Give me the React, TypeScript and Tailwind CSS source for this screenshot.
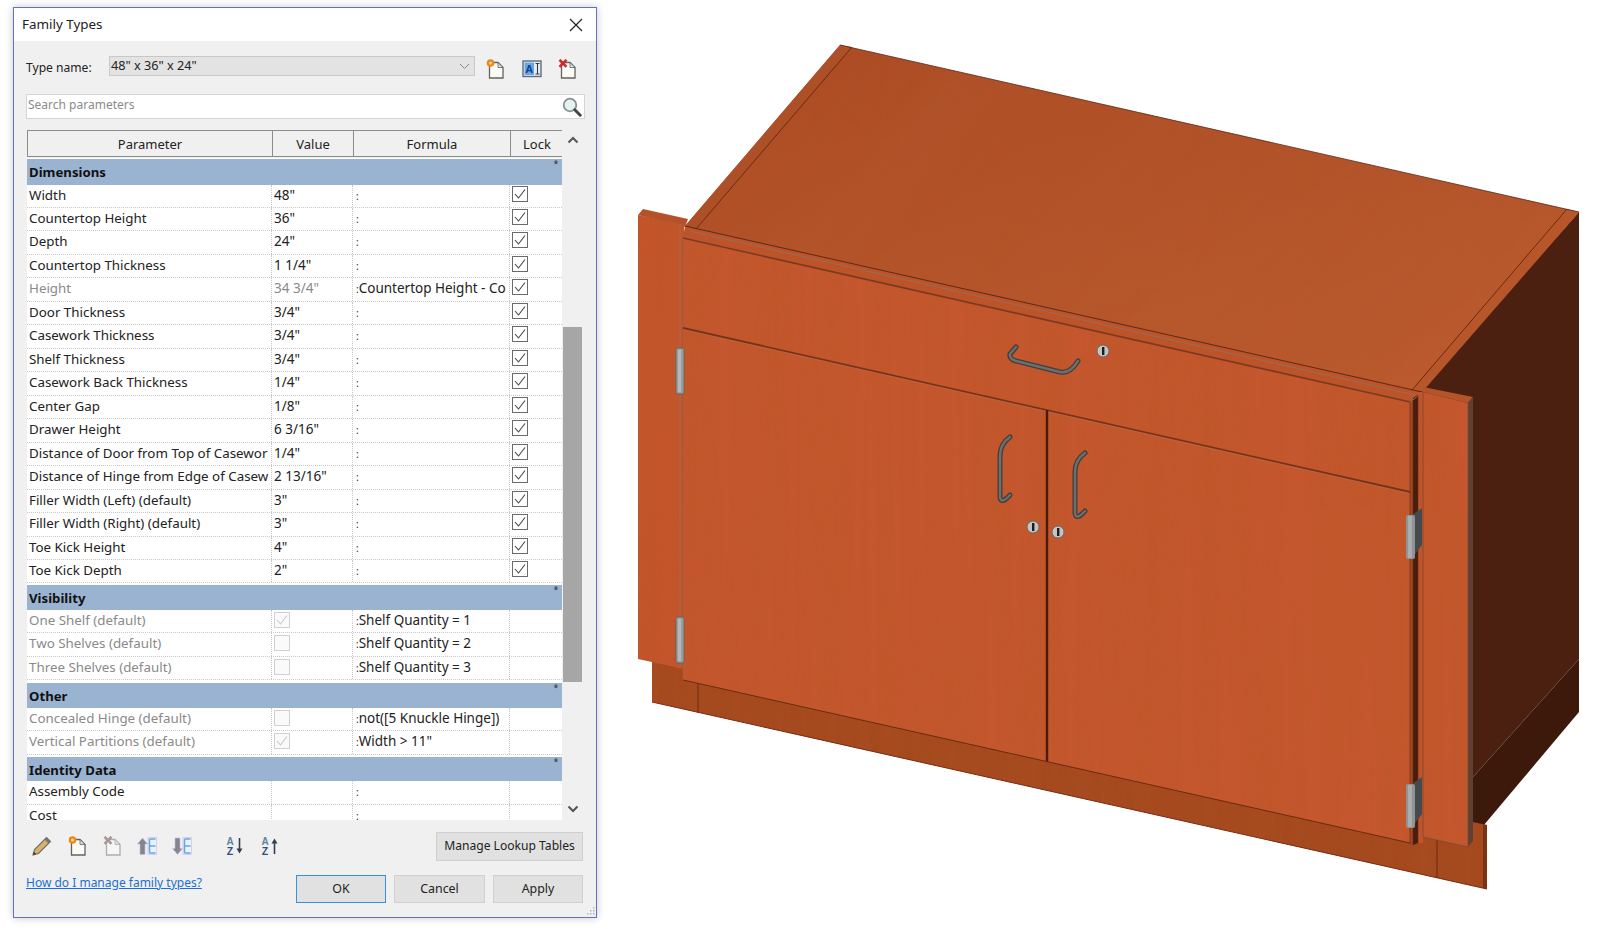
import React from "react";

const font = "[font-family:'Noto_Sans',sans-serif]";

type Row = { name: string; value?: string; formula?: string; muted?: boolean; lock?: boolean; box?: "on" | "off" };

const dims: Row[] = [
  { name: "Width", value: '48"', lock: true },
  { name: "Countertop Height", value: '36"', lock: true },
  { name: "Depth", value: '24"', lock: true },
  { name: "Countertop Thickness", value: '1 1/4"', lock: true },
  { name: "Height", value: '34 3/4"', formula: "Countertop Height - Co", muted: true, lock: true },
  { name: "Door Thickness", value: '3/4"', lock: true },
  { name: "Casework Thickness", value: '3/4"', lock: true },
  { name: "Shelf Thickness", value: '3/4"', lock: true },
  { name: "Casework Back Thickness", value: '1/4"', lock: true },
  { name: "Center Gap", value: '1/8"', lock: true },
  { name: "Drawer Height", value: '6 3/16"', lock: true },
  { name: "Distance of Door from Top of Casewor", value: '1/4"', lock: true },
  { name: "Distance of Hinge from Edge of Casew", value: '2 13/16"', lock: true },
  { name: "Filler Width (Left) (default)", value: '3"', lock: true },
  { name: "Filler Width (Right) (default)", value: '3"', lock: true },
  { name: "Toe Kick Height", value: '4"', lock: true },
  { name: "Toe Kick Depth", value: '2"', lock: true },
];
const vis: Row[] = [
  { name: "One Shelf (default)", box: "on", formula: "Shelf Quantity = 1", muted: true },
  { name: "Two Shelves (default)", box: "off", formula: "Shelf Quantity = 2", muted: true },
  { name: "Three Shelves (default)", box: "off", formula: "Shelf Quantity = 3", muted: true },
];
const other: Row[] = [
  { name: "Concealed Hinge (default)", box: "off", formula: "not([5 Knuckle Hinge])", muted: true },
  { name: "Vertical Partitions (default)", box: "on", formula: 'Width > 11"', muted: true },
];
const identity: Row[] = [{ name: "Assembly Code" }, { name: "Cost" }];

function Check({ on, dim }: { on: boolean; dim?: boolean }) {
  return (
    <svg width="16" height="16" viewBox="0 0 16 16" className="shrink-0">
      <rect x="0.5" y="0.5" width="15" height="15" fill={dim ? "#fafafa" : "#fff"} stroke={dim ? "#d0d0d0" : "#6a6a6a"} />
      {on && <path d="M3 8l3.5 4L13 3.5" fill="none" stroke={dim ? "#c8c8c8" : "#444"} strokeWidth="1.1" />}
    </svg>
  );
}

function ParamRow({ r }: { r: Row }) {
  return (
    <div className="flex h-[23.47px] shrink-0 border-b border-dotted border-[#c8c8c8] text-[13.5px] leading-[21px] text-[#222]">
      <div className={`w-[245px] shrink-0 overflow-hidden whitespace-nowrap border-r border-dotted border-[#c8c8c8] pl-[2px] text-[13.35px] ${r.muted ? "text-[#8a8a8a]" : ""}`}>{r.name}</div>
      <div className={`flex w-[81px] shrink-0 items-start overflow-hidden whitespace-nowrap border-r border-dotted border-[#c8c8c8] pl-[2px] ${r.muted ? "text-[#8a8a8a]" : ""}`}>
        {r.box ? <span className="pl-[0px] pt-[2px]"><Check on={r.box === "on"} dim /></span> : r.value}
      </div>
      <div className="w-[157px] shrink-0 overflow-hidden whitespace-nowrap border-r border-dotted border-[#c8c8c8] pl-[3px]">
        <span className="text-[10px]">:</span>{r.formula}
      </div>
      <div className="flex w-[52px] shrink-0 items-start pl-[2px] pt-[1px]">{r.lock && <Check on />}</div>
    </div>
  );
}

function Section({ title, top, h }: { title: string; top: string; h: string }) {
  return (
    <div className={`${top} ${h} flex shrink-0 justify-between bg-[#9ab3d1] pl-[2px] pr-[4px] text-[13.2px] font-bold leading-[27px] text-[#111]`}>
      <span>{title}</span>
      <span className="text-[8px] leading-[10px] text-[#444]">*</span>
    </div>
  );
}

function Head({ w, label }: { w: string; label: string }) {
  return <div className={`${w} shrink-0 border-r border-[#8c8c8c] text-center text-[13px] leading-[27px] text-[#222]`}>{label}</div>;
}

function Doc({ dim, badge }: { dim?: boolean; badge: "star" | "x" }) {
  const c = dim ? "#adadad" : "#626262";
  return (
    <svg width="20" height="20" viewBox="0 0 20 20" className="shrink-0">
      <path d="M3.5 3.5h8.5l5 5v10.5H3.5z" fill={dim ? "#f6f6f6" : "#fbfbf6"} stroke={c} strokeWidth="1.3" />
      <path d="M12 3.5v5h5z" fill="#dfe3ea" stroke={c} strokeWidth="0.8" />
      {badge === "star" ? (
        <g>
          <circle cx="4.5" cy="4" r="3.8" fill="#ee8618" />
          <circle cx="4.5" cy="4" r="1.5" fill="#fbd98a" />
        </g>
      ) : (
        <path d="M1.5 0.8l7 7M8.5 0.8l-7 7" stroke={dim ? "#a89898" : "#d12a2a"} strokeWidth="2.6" />
      )}
    </svg>
  );
}

function Rename() {
  return (
    <svg width="20" height="20" viewBox="0 0 20 20" className="shrink-0">
      <rect x="1" y="2" width="18" height="15.5" fill="#e8edf4" stroke="#5f6b7c" strokeWidth="1.4" />
      <rect x="2.5" y="3.5" width="9.5" height="12.5" fill="#66a8e6" />
      <text x="7.3" y="14" textAnchor="middle" fontFamily="Liberation Sans" fontWeight="700" fontSize="11" fill="#123f86">A</text>
      <path d="M13.5 4.5h4M13.5 15h4M15.5 4.5V15" stroke="#3a3a3a" strokeWidth="1.1" />
    </svg>
  );
}

function Search() {
  return (
    <svg width="20" height="20" viewBox="0 0 20 20" className="shrink-0">
      <circle cx="8" cy="8" r="6.3" fill="#e6f2f2" stroke="#87938f" strokeWidth="1.8" />
      <path d="M12.8 12.8l5.4 5.4" stroke="#454545" strokeWidth="3" strokeLinecap="round" />
    </svg>
  );
}

function Pencil() {
  return (
    <svg width="20" height="20" viewBox="0 0 20 20" className="shrink-0">
      <path d="M1 19l1.5-5.5L14.5 1.5l4 4L6.5 17.5z" fill="#d6b26c" stroke="#6f6a5a" strokeWidth="1.1" />
      <path d="M14.5 1.5l4 4-2 2-4-4z" fill="#7d7472" />
      <path d="M1 19l.9-3.2 2.3 2.3z" fill="#3a3a3a" />
    </svg>
  );
}

function MoveIcon({ up }: { up?: boolean }) {
  return (
    <svg width="20" height="20" viewBox="0 0 20 20" className="shrink-0">
      <path d={up ? "M5.5 2l5 6H8v10.5H3V8H.5z" : "M5.5 18.5l5-6H8V2H3v10.5H.5z"} fill="#84858f" stroke="#c9b8e6" strokeWidth="0.6" />
      <rect x="11" y="1.5" width="8.5" height="17" fill="#e9f3fb" stroke="#d3c4ec" strokeWidth="0.8" />
      <path d="M12.5 3h6M12.5 10h6M12.5 17h6M12.5 3v14" fill="none" stroke="#63a8e2" strokeWidth="1.5" />
    </svg>
  );
}

function Sort({ down }: { down?: boolean }) {
  return (
    <svg width="20" height="20" viewBox="0 0 20 20" className="shrink-0">
      <text x="6" y="8.5" textAnchor="middle" fontFamily="Liberation Sans" fontWeight="700" fontSize="10" fill="#5f83a8">A</text>
      <text x="6" y="18.5" textAnchor="middle" fontFamily="Liberation Sans" fontWeight="700" fontSize="10.5" fill="#324f70">Z</text>
      <path d={down ? "M15.5 2v12" : "M15.5 18V6"} stroke="#324056" strokeWidth="1.6" fill="none" />
      <path d={down ? "M12.5 12.5h6l-3 5z" : "M12.5 7.5h6l-3-5z"} fill="#324056" />
    </svg>
  );
}

function Btn({ label, w, focus }: { label: string; w: string; focus?: boolean }) {
  return (
    <div className={`${w} flex h-[28px] shrink-0 items-center justify-center border text-[12.4px] text-[#222] ${focus ? "border-[#3a8fe0] bg-[#e1e1e1]" : "border-[#d0d0d0] bg-[#e1e1e1]"}`}>
      {label}
    </div>
  );
}

function Grip() {
  return (
    <svg width="11" height="11" viewBox="0 0 11 11" className="self-end">
      <path d="M9 1h1.5v1.5H9zM6 4h1.5v1.5H6zM9 4h1.5v1.5H9zM3 7h1.5v1.5H3zM6 7h1.5v1.5H6zM9 7h1.5v1.5H9z" fill="#b5b5b5" />
    </svg>
  );
}

function Dialog() {
  return (
    <div className={`${font} ml-[13px] mt-[7px] flex h-[911px] w-[584px] shrink-0 flex-col border border-[#6470c0] bg-[#f0f0f0] shadow-[0_0_8px_rgba(0,0,0,0.22)]`}>
      <div className="flex h-[33px] shrink-0 items-center justify-between bg-white pl-[8px] pr-[13px]">
        <span className="text-[13.4px] text-[#222]">Family Types</span>
        <svg width="14" height="14" viewBox="0 0 14 14"><path d="M1 1l12 12M13 1L1 13" stroke="#222" strokeWidth="1.2" /></svg>
      </div>

      <div className="flex flex-1 flex-col pl-[12px] pr-[11px]">
        <div className="mt-[14px] flex h-[22px] shrink-0 items-center">
          <span className="w-[83px] shrink-0 pl-[0px] pt-[5px] text-[12.1px] text-[#222]">Type name:</span>
          <div className="flex h-[20px] w-[366px] shrink-0 items-center justify-between border border-[#c8c8c8] bg-[#e3e3e3] pl-[1px] pr-[4px] text-[12.7px] text-[#222]">
            <span>48" x 36" x 24"</span>
            <svg width="11" height="7" viewBox="0 0 11 7"><path d="M1 1l4.5 4.5L10 1" fill="none" stroke="#888" strokeWidth="1" /></svg>
          </div>
          <div className="ml-[11px] mt-[5px] flex gap-[16px]">
            <Doc badge="star" />
            <Rename />
            <Doc badge="x" />
          </div>
        </div>

        <div className="mt-[17px] flex h-[25px] shrink-0 items-center justify-between border border-[#d4d4d4] bg-white pl-[1px] pr-0 text-[12px] text-[#8a8a8a]">
          <span className="-mt-[4px]">Search parameters</span>
          <span className="-ml-[2px] pr-[2px]"><Search /></span>
        </div>

        <div className="mt-[11px] flex h-[690px] shrink-0 pl-[1px]">
          <div className="flex w-[535px] shrink-0 flex-col overflow-hidden bg-white">
            <div className="flex h-[27px] shrink-0 border-b border-l border-t border-[#8c8c8c] bg-[#f0f0f0]">
              <Head w="w-[245px]" label="Parameter" />
              <Head w="w-[81px]" label="Value" />
              <Head w="w-[157px]" label="Formula" />
              <div className="w-[52px] shrink-0 text-center text-[13px] leading-[27px] text-[#222]">Lock</div>
            </div>
            <div className="h-[1px] shrink-0 bg-[#f0f0f0]" />
            <Section title="Dimensions" top="mt-[1px]" h="h-[25.5px]" />
            {dims.map((r) => <ParamRow key={r.name} r={r} />)}
            <Section title="Visibility" top="mt-[2px]" h="h-[24.5px]" />
            {vis.map((r) => <ParamRow key={r.name} r={r} />)}
            <Section title="Other" top="mt-[3px]" h="h-[24.5px]" />
            {other.map((r) => <ParamRow key={r.name} r={r} />)}
            <Section title="Identity Data" top="mt-[2px]" h="h-[24.5px]" />
            {identity.map((r) => <ParamRow key={r.name} r={r} />)}
          </div>
          <div className="flex w-[21px] shrink-0 flex-col items-center bg-[#f0f0f0]">
            <svg width="12" height="8" viewBox="0 0 12 8" className="mt-[6px] shrink-0"><path d="M1.5 6.5L6 2l4.5 4.5" fill="none" stroke="#555" strokeWidth="2" /></svg>
            <div className="mt-[183px] h-[355px] w-[19px] shrink-0 bg-[#a6a6a6]" />
            <svg width="12" height="8" viewBox="0 0 12 8" className="mt-[123px] shrink-0"><path d="M1.5 1.5L6 6l4.5-4.5" fill="none" stroke="#555" strokeWidth="2" /></svg>
          </div>
        </div>

        <div className="mt-[12px] flex h-[29px] shrink-0 items-center justify-between pl-[6px] pr-[2px]">
          <div className="-mt-[2px] flex items-center">
            <Pencil />
            <span className="ml-[16px]"><Doc badge="star" /></span>
            <span className="ml-[15px]"><Doc dim badge="x" /></span>
            <span className="ml-[14px]"><MoveIcon up /></span>
            <span className="ml-[15px]"><MoveIcon /></span>
            <span className="ml-[32px]"><Sort down /></span>
            <span className="ml-[15px]"><Sort /></span>
          </div>
          <div className="flex h-[29px] w-[147px] items-center justify-center whitespace-nowrap border border-[#d0d0d0] bg-[#e1e1e1] text-[12.1px] text-[#222]">Manage Lookup Tables</div>
        </div>

        <div className="mt-[14px] flex shrink-0 items-start justify-between pr-[2px]">
          <span className="-mt-[1px] text-[12px] text-[#1a6fd6] underline">How do I manage family types?</span>
          <div className="flex gap-[8px]">
            <Btn label="OK" w="w-[90px]" focus />
            <Btn label="Cancel" w="w-[91px]" />
            <Btn label="Apply" w="w-[90px]" />
          </div>
        </div>
        <div className="-mr-[10px] mt-auto flex justify-end"><Grip /></div>
      </div>
    </div>
  );
}

function Handle({ d }: { d: string }) {
  return (
    <g fill="none" strokeLinecap="round" strokeLinejoin="round">
      <path d={d} stroke="#3f3f3f" strokeWidth="5" />
      <path d={d} stroke="#6e6e6e" strokeWidth="2.4" />
    </g>
  );
}

function Lock({ x, y }: { x: number; y: number }) {
  return (
    <g>
      <circle cx={x} cy={y} r="6" fill="#c4c4c4" stroke="#6a6a6a" strokeWidth="1" />
      <rect x={x - 1} y={y - 4} width="2.4" height="8" fill="#1c1c1c" />
    </g>
  );
}

function HingeLeft({ y }: { y: number }) {
  return (
    <g>
      <rect x="676" y={y} width="8" height="46" rx="2" fill="#9a9d9e" stroke="#5e6060" strokeWidth="0.8" />
      <rect x="678" y={y + 2} width="3" height="42" fill="#b4b7b8" />
    </g>
  );
}

function HingeRight({ y }: { y: number }) {
  return (
    <g>
      <path d={`M1412 ${y}l10 -7v37l-10 13z`} fill="#464a4d" />
      <rect x="1406" y={y} width="9" height="44" rx="2" fill="#8f9496" />
      <rect x="1408" y={y + 1} width="4" height="42" fill="#a9adae" />
    </g>
  );
}

function Wood({ clip, filter, angle = 0, opacity = 0.5 }: { clip: string; filter: string; angle?: number; opacity?: number }) {
  return (
    <g clipPath={`url(#${clip})`} opacity={opacity}>
      <g transform={angle ? `rotate(${angle} 1100 400)` : undefined}>
        <rect x={angle ? 300 : 620} y={angle ? -400 : 0} width={angle ? 1600 : 980} height={angle ? 1600 : 929} filter={`url(#${filter})`} />
      </g>
    </g>
  );
}

const P = {
  top: "840,45 1579,212 1422,392 685,226",
  face: "683,238 1410,402 1410,843 683,680",
  lfill: "638,215 684,225 684,669 638,659",
  rfill: "1423,392 1468,403 1468,847 1423,837",
  kick: "652,650 1487,825 1487,889 652,702",
};

function Cabinet() {
  return (
    <svg viewBox="620 0 980 929" width="980" height="929" className="ml-[23px] shrink-0">
      <defs>
        <filter id="grainV" x="0" y="0" width="100%" height="100%">
          <feTurbulence type="fractalNoise" baseFrequency="0.05 0.0015" numOctaves="4" seed="7" />
          <feColorMatrix type="matrix" values="0 0 0 0 0.45  0 0 0 0 0.1  0 0 0 0 0.02  1.6 0 0 0 -0.6" />
        </filter>
        <filter id="grainT" x="0" y="0" width="100%" height="100%">
          <feTurbulence type="fractalNoise" baseFrequency="0.014 0.0012" numOctaves="4" seed="3" />
          <feColorMatrix type="matrix" values="0 0 0 0 0.45  0 0 0 0 0.1  0 0 0 0 0.03  2 0 0 0 -0.75" />
        </filter>
        <linearGradient id="topG" x1="0.2" y1="0" x2="0.8" y2="1">
          <stop offset="0" stopColor="#ad4d25" />
          <stop offset="1" stopColor="#ba5a2e" />
        </linearGradient>
        <clipPath id="cTop"><polygon points={P.top} /></clipPath>
        <clipPath id="cFace"><polygon points={P.face} /></clipPath>
        <clipPath id="cL"><polygon points={P.lfill} /></clipPath>
        <clipPath id="cR"><polygon points={P.rfill} /></clipPath>
        <clipPath id="cK"><polygon points={P.kick} /></clipPath>
      </defs>

      {/* right side */}
      <polygon points="1410,400 1579,212 1579,659 1473,777 1410,800" fill="#4c2010" />
      <polygon points="1473,777 1579,659 1579,712 1473,838" fill="#3d190b" />

      {/* toe kick */}
      <polygon points={P.kick} fill="#a5491f" />
      <Wood clip="cK" filter="grainV" opacity={0.32} />
      <polygon points="1483,824 1487,825 1487,889 1483,888" fill="#7a3415" />
      <path d="M698 683V713M1437 838V878" stroke="#6a2c12" strokeWidth="1" />
      <path d="M652 702L1487 889" stroke="#7a2a10" strokeWidth="1" />

      {/* top */}
      <polygon points={P.top} fill="url(#topG)" />
      <Wood clip="cTop" filter="grainT" angle={42} opacity={0.4} />
      <polygon points="1567,209 1579,212 1422,392 1412,390" fill="#b8562b" />
      <path d="M1567 209L1412 390" stroke="#6a2a10" strokeWidth="1" />
      <polygon points="840,45 852,47 696,229 685,226" fill="#ad5028" />
      <path d="M852 47L696 229" stroke="#6a2a10" strokeWidth="1" />
      <path d="M840 45L1579 212" stroke="#5a2a16" strokeWidth="0.8" />

      {/* front band */}
      <polygon points="685,226 1422,392 1410,402 683,238" fill="#bd5429" />
      <path d="M685 226L1422 392" stroke="#5a2410" strokeWidth="1" />
      <path d="M690 231L1415 395" stroke="#8a7468" strokeWidth="0.8" />

      {/* left filler */}
      <polygon points="643,209 688,219 685,227 638,215" fill="#b5522a" />
      <polygon points={P.lfill} fill="#c4552b" />
      <Wood clip="cL" filter="grainV" opacity={0.3} />
      <path d="M680 224V668" stroke="#9a7060" strokeWidth="0.8" />
      <path d="M683 238V680" stroke="#8a5a48" strokeWidth="1" />

      {/* face */}
      <polygon points={P.face} fill="#c4572d" />
      <Wood clip="cFace" filter="grainV" opacity={0.32} />
      <path d="M683 238L1410 402" stroke="#7a3a22" strokeWidth="1.6" />
      <path d="M683 328L1410 492" stroke="#7a3216" strokeWidth="1.8" />
      <path d="M683 329.5L1410 493.5" stroke="#a8755e" strokeWidth="0.5" />
      <path d="M1047 410V762" stroke="#4a1a0a" strokeWidth="2.4" />
      <path d="M683 680L1410 843" stroke="#6a2c12" strokeWidth="1" />

      {/* gap on right */}
      <rect x="1410" y="400" width="3" height="444" fill="#a04a24" />
      <polygon points="1413,398 1418,395 1418,843 1413,845" fill="#4a1d0c" />
      <rect x="1418" y="392" width="5" height="451" fill="#c0552b" />
      <path d="M1410 402L1418 396" stroke="#8a7468" strokeWidth="1" />
      <path d="M1410 402V844M1413 400V845M1418 396V843" stroke="#5e2a14" strokeWidth="0.6" />

      {/* right filler */}
      <polygon points="1423,387 1473,397 1468,403 1423,392" fill="#b5532a" />
      <polygon points={P.rfill} fill="#c4572d" />
      <Wood clip="cR" filter="grainV" opacity={0.3} />
      <polygon points="1468,403 1473,397 1473,841 1468,847" fill="#5f4034" />
      <path d="M1423 392V837L1468 847V403" fill="none" stroke="#7a4a36" strokeWidth="0.8" />

      <HingeLeft y={348} />
      <HingeLeft y={617} />
      <HingeRight y={515} />
      <HingeRight y={784} />

      <Handle d="M1016 347L1010 354Q1009 359 1016 361L1060 372Q1070 374 1078 361" />
      <Handle d="M1010 437Q1000 444 1000 456V497Q1001 505 1010 495" />
      <Handle d="M1085 453Q1075 460 1075 472V513Q1076 521 1085 511" />
      <Lock x={1103} y={351} />
      <Lock x={1033} y={527} />
      <Lock x={1058} y={532} />
    </svg>
  );
}

export default function App() {
  return (
    <div className="flex h-[929px] w-[1600px] items-start overflow-hidden bg-white">
      <Dialog />
      <Cabinet />
    </div>
  );
}
